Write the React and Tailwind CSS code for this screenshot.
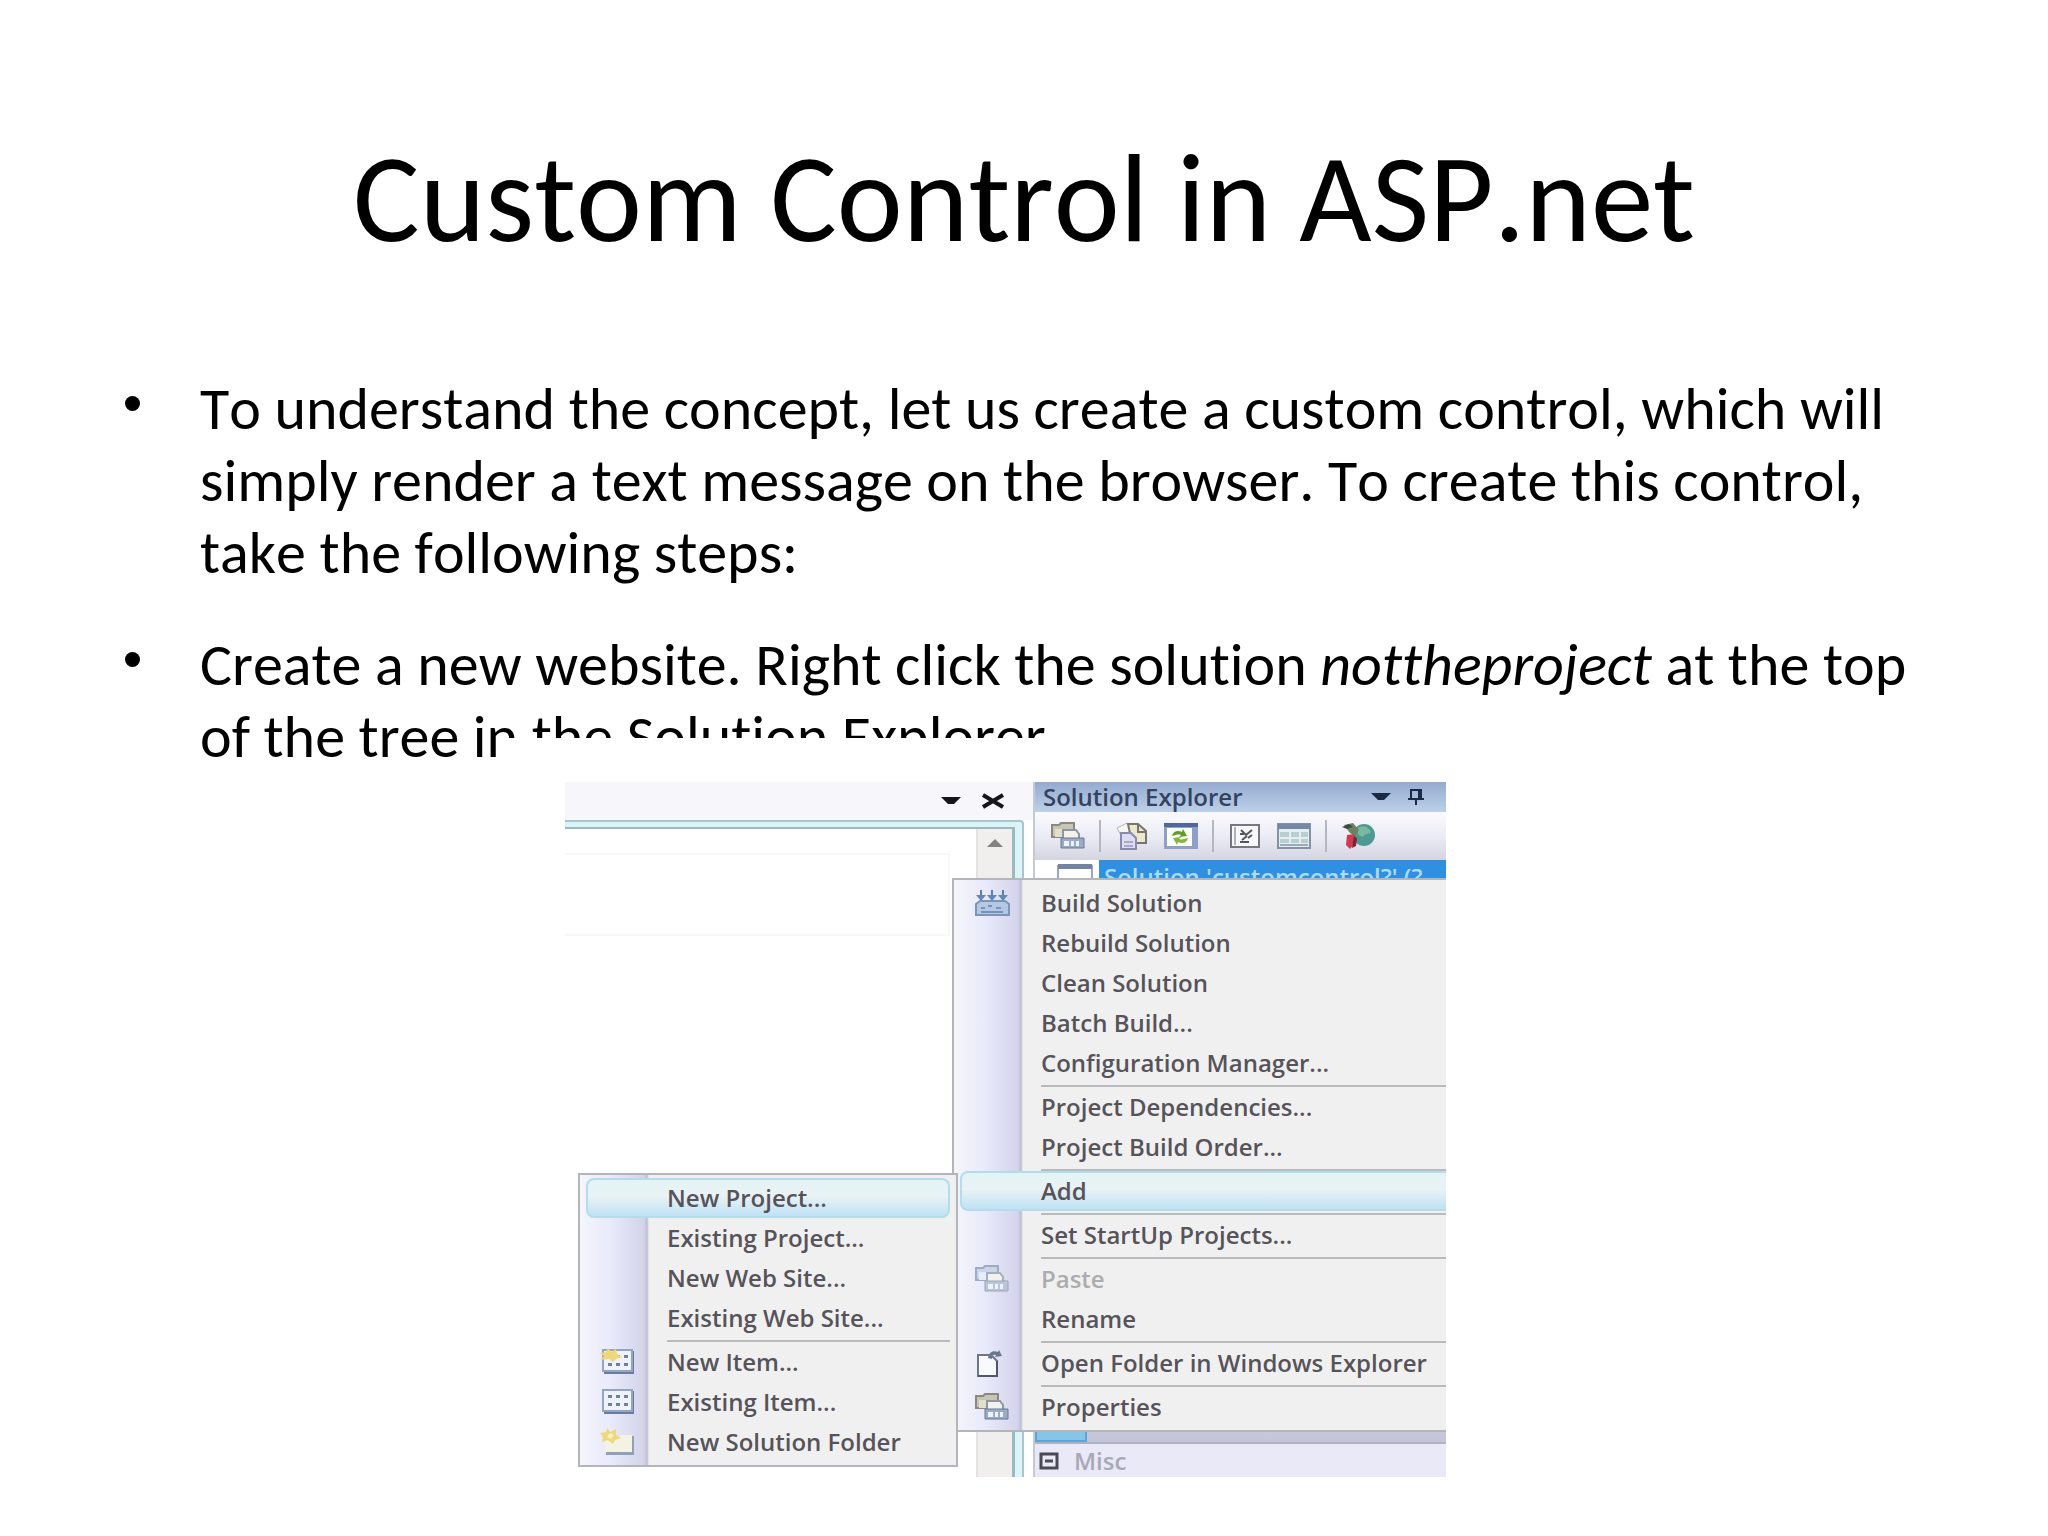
import React from "react";

const FolderWindowIcon = ({ muted }) => (
  <svg viewBox="0 0 36 28" className="w-9 h-7 shrink-0">
    <path d="M2 3h7l2-2h13v14H2z" fill={muted ? "#ccd5e6" : "#c9c5b4"} stroke={muted ? "#9eabc2" : "#8b897f"} strokeWidth="2" />
    <path d="M5 7h12v8H5z" fill={muted ? "#e6edf8" : "#e2dfcb"} />
    <path d="M13 8h13l3 4v8H13z" fill="#f2f1ec" stroke={muted ? "#a3aec2" : "#8e96a4"} strokeWidth="2" />
    <path d="M11 16h23v10H11z" fill={muted ? "#b9c5d8" : "#9aabc6"} stroke={muted ? "#98a6bd" : "#667896"} strokeWidth="1" />
    <path d="M14 19h5v5h-5zM21 19h3v5h-3zM26 19h3v5h-3z" fill="#eef2fa" />
  </svg>
);

const ShowFilesIcon = () => (
  <svg viewBox="0 0 36 28" className="w-9 h-7 shrink-0">
    <path d="M3 6l10-5 4 6-7 12z" fill="#f7f6f4" stroke="#b5b1b7" strokeWidth="1" />
    <path d="M14 2h10l8 7v12H18z" fill="#ece7ce" stroke="#77766d" strokeWidth="2" />
    <path d="M24 3v7h8" fill="none" stroke="#77766d" strokeWidth="2" />
    <path d="M7 11h10l5 5v11H7z" fill="#dcdcf2" stroke="#8a8aac" strokeWidth="2" />
    <path d="M10 20h9M10 24h9" stroke="#a9a9ca" strokeWidth="2" />
  </svg>
);

const RefreshIcon = () => (
  <svg viewBox="0 0 36 28" className="w-9 h-7 shrink-0">
    <path d="M1 1h34v26H1z" fill="#8fa0c6" />
    <path d="M1 1h34v4H1z" fill="#4f679c" />
    <path d="M4 6h25v18H4z" fill="#fbfdf8" />
    <path d="M9 14c1-5 6-6 10-4l1-3 4 7-8 1 2-2c-3-1-5 0-9 1z" fill="#5f9f25" />
    <path d="M25 16c-1 5-6 6-10 4l-1 3-4-7 8-1-2 2c3 1 5 0 9-1z" fill="#86b53c" />
  </svg>
);

const ViewCodeIcon = () => (
  <svg viewBox="0 0 36 28" className="w-9 h-7 shrink-0">
    <path d="M4 3h28v22H4z" fill="#f8f8fa" stroke="#777782" strokeWidth="2" />
    <path d="M8 5v18" stroke="#b0b0b8" strokeWidth="2" />
    <path d="M14 8l5 5 6-5M13 12h4M15 18l5-4M13 20h9M25 13l-4 3" fill="none" stroke="#55555f" strokeWidth="2" />
  </svg>
);

const DesignerIcon = () => (
  <svg viewBox="0 0 36 28" className="w-9 h-7 shrink-0">
    <path d="M2 2h32v24H2z" fill="#e5edef" stroke="#8492a3" strokeWidth="2" />
    <path d="M2 2h32v5H2z" fill="#7387a6" />
    <path d="M4 10h9v5H4zM15 10h8v5h-8zM25 10h7v5h-7zM4 17h9v4H4zM15 17h8v4h-8zM25 17h7v4h-7z" fill="#b8cfd2" />
    <path d="M4 23h28" stroke="#9baab8" strokeWidth="2" />
  </svg>
);

const GlobeIcon = () => (
  <svg viewBox="0 0 36 28" className="w-9 h-7 shrink-0">
    <ellipse cx="24" cy="13" rx="11" ry="11" fill="#4d9a92" />
    <path d="M18 6c5-3 11-1 13 4-3 3-6 1-8 5-3 0-7-4-5-9z" fill="#79b9a0" />
    <path d="M4 3l9-2 6 7-4 6-5-3z" fill="#6c8260" />
    <path d="M2 5l7-3 4 3-6 2z" fill="#3d4a3f" />
    <path d="M7 13l7-1 1 9-5 6-4-4z" fill="#cf3a50" />
    <path d="M14 14l3 2-1 8-4 2z" fill="#7c2433" />
  </svg>
);

const BuildIcon = () => (
  <svg viewBox="0 0 36 28" className="w-9 h-7 shrink-0">
    <path d="M7 1v9M18 1v9M29 1v9" stroke="#5b7db0" strokeWidth="2" />
    <path d="M2 6h10l-5 6zM13 6h10l-5 6zM24 6h10l-5 6z" fill="#6487b8" />
    <path d="M2 15l4-3h25l4 3v11H2z" fill="#b4c8e4" stroke="#7b94ba" strokeWidth="2" />
    <path d="M7 19h4M14 17h4M22 19h5M7 23h22" stroke="#7892bb" strokeWidth="2" />
  </svg>
);

const OpenFolderIcon = () => (
  <svg viewBox="0 0 36 28" className="w-9 h-7 shrink-0">
    <path d="M4 6h13l6 6v15H4z" fill="#f9fafc" stroke="#6d7788" strokeWidth="2" />
    <path d="M23 12v15H4" fill="none" stroke="#4f5969" strokeWidth="2" />
    <path d="M14 9c1-6 5-8 10-6l1-2 3 6-7 1 1-2c-3-1-4 0-4 4z" fill="#6a788c" />
  </svg>
);

const ItemIcon = ({ isNew }) => (
  <svg viewBox="0 0 36 28" className="w-9 h-7 shrink-0">
    <path d="M4 3h30v23H4z" fill="#6a7c9d" />
    <path d="M3 2h29v21H3z" fill="#eef2fa" stroke="#94a5c2" strokeWidth="2" />
    <path d="M8 7h4v3H8zM16 7h4v3h-4zM24 7h4v3h-4zM8 15h4v3H8zM16 15h4v3h-4zM24 15h4v3h-4z" fill="#71809a" />
    {isNew && <path d="M8 0l3 4 5-3 1 5 5 3-6 2-3 3-4-3-9 1 4-4-4-3 6-1z" fill="#eed87b" />}
  </svg>
);

const NewFolderIcon = () => (
  <svg viewBox="0 0 36 28" className="w-9 h-7 shrink-0">
    <path d="M6 11h12l3-3h13v19H6z" fill="#919fb8" />
    <path d="M5 10h13l3-3h11v17H5z" fill="#f4f2e3" />
    <path d="M7 0l3 4 6-3v6l5 3-6 2-2 4-5-4-6 2 1-5-3-4 6-1z" fill="#eed87b" />
    <path d="M10 5l4 2-3 4-4-2z" fill="#fbf3c2" />
  </svg>
);

const buildMenu = [
  { label: "Build Solution", icon: <BuildIcon /> },
  { label: "Rebuild Solution" },
  { label: "Clean Solution" },
  { label: "Batch Build..." },
  { label: "Configuration Manager..." },
  { separator: true },
  { label: "Project Dependencies..." },
  { label: "Project Build Order..." },
  { separator: true },
  { label: "Add", active: true },
  { separator: true },
  { label: "Set StartUp Projects..." },
  { separator: true },
  { label: "Paste", icon: <FolderWindowIcon muted />, disabled: true },
  { label: "Rename" },
  { separator: true },
  { label: "Open Folder in Windows Explorer", icon: <OpenFolderIcon /> },
  { separator: true },
  { label: "Properties", icon: <FolderWindowIcon /> },
];

const addMenu = [
  { label: "New Project...", active: true },
  { label: "Existing Project..." },
  { label: "New Web Site..." },
  { label: "Existing Web Site..." },
  { separator: true },
  { label: "New Item...", icon: <ItemIcon isNew /> },
  { label: "Existing Item...", icon: <ItemIcon /> },
  { label: "New Solution Folder", icon: <NewFolderIcon /> },
];

const Menu = ({ items, name }) => (
  <div
    role="menu"
    aria-label={name}
    className="py-[3px] px-[6px] bg-[linear-gradient(to_right,#f5f5fb_0px,#e9eafb_30px,#d3d4ea_64px,#bcbed0_67px,#f1f0f1_69px)]"
  >
    {items.map((item, i) =>
      item.separator ? (
        <div key={i} role="separator" className="h-1 pt-[2px] pl-[81px]">
          <div className="h-[2px] bg-[#b9babd]" />
        </div>
      ) : (
        <button
          key={i}
          role="menuitem"
          disabled={item.disabled}
          className={`flex w-full h-10 items-center pl-[12px] text-left text-[24px] leading-7 font-semibold whitespace-nowrap ${
            item.disabled ? "text-[#acacaf]" : "text-[#56545a]"
          } ${
            item.active
              ? "rounded-lg border-2 border-[#b5dcea] bg-[linear-gradient(#e3f4f5,#eaf2f4_45%,#bfe2f5)]"
              : "border-2 border-transparent"
          }`}
        >
          <span className="w-[67px] shrink-0 flex">{item.icon}</span>
          {item.label}
        </button>
      )
    )}
  </div>
);

const EditorPane = () => (
  <div className="flex-1 min-w-0 flex flex-col">
    <div className="h-[38px] bg-[#f6f6fb] flex items-center justify-end gap-[20px] pr-[28px]">
      <button aria-label="Window list">
        <svg viewBox="0 0 20 8" className="w-5 h-2">
          <path d="M0 0h20l-7 7H7z" fill="#15151b" />
        </svg>
      </button>
      <button aria-label="Close">
        <svg viewBox="0 0 24 16" className="w-6 h-4">
          <path d="M2 2l20 12M22 2L2 14" stroke="#15151b" strokeWidth="4" />
        </svg>
      </button>
    </div>
    <div className="flex-1 flex pr-[9px]">
      <div className="flex-1 flex border-t-2 border-r-2 border-[#a8c6cd] bg-[#dcf4f7] pt-[5px] pr-[7px] rounded-tr">
        <div className="flex-1 flex border-t-2 border-r-[3px] border-[#9abac2] bg-white">
          <div className="flex-1 pt-[24px]">
            <div className="h-[83px] mr-[26px] border-y-2 border-r-2 border-[#f8f8f5]" />
          </div>
          <div className="w-[36px] bg-[#f0efee] border-l-2 border-[#e3e1e2] flex justify-center pt-[10px]">
            <svg viewBox="0 0 16 8" className="w-4 h-2">
              <path d="M8 0l8 8H0z" fill="#838383" />
            </svg>
          </div>
        </div>
      </div>
    </div>
  </div>
);

const SolutionExplorer = () => (
  <div className="w-[413px] flex flex-col border-l-2 border-[#c3cad6]">
    <div className="h-[30px] bg-[linear-gradient(#93abcf,#bdd0ea)] flex items-center pl-[8px] pr-[21px] text-[#34435f]">
      <h2 className="flex-1 text-[24px] leading-7 font-semibold">Solution Explorer</h2>
      <button aria-label="Window position" className="mr-[16px]">
        <svg viewBox="0 0 20 8" className="w-5 h-2">
          <path d="M0 0h20l-7 7H7z" fill="#1c2b45" />
        </svg>
      </button>
      <button aria-label="Auto hide">
        <svg viewBox="0 0 18 18" className="w-[18px] h-[18px]">
          <path d="M4 2h10v9H4zM1 11h16M9 11v6M12 2v9" fill="none" stroke="#1c2b45" strokeWidth="2" />
        </svg>
      </button>
    </div>
    <div className="h-[48px] bg-[linear-gradient(#fafafd,#ececf6_50%,#d5d5e2)] flex items-center gap-[13px] pl-[15px]">
      <button aria-label="Properties"><FolderWindowIcon /></button>
      <div className="w-[2px] h-8 bg-[#b5b5c4]" />
      <button aria-label="Show all files"><ShowFilesIcon /></button>
      <button aria-label="Refresh"><RefreshIcon /></button>
      <div className="w-[2px] h-8 bg-[#b5b5c4]" />
      <button aria-label="View code"><ViewCodeIcon /></button>
      <button aria-label="View designer"><DesignerIcon /></button>
      <div className="w-[2px] h-8 bg-[#b5b5c4]" />
      <button aria-label="Configuration"><GlobeIcon /></button>
    </div>
    <div className="flex-1 bg-white">
      <div className="flex h-[34px]">
        <svg viewBox="0 0 64 34" className="w-16 h-[34px] shrink-0">
          <path d="M23 6h34v26H23z" fill="#fff" stroke="#9ea7bd" strokeWidth="2" />
          <path d="M23 4h34v5H23z" fill="#7482a3" />
        </svg>
        <div className="flex-1 px-[5px] pt-[3px] bg-[#2f8fe0] text-[#a9dcf8] text-[24px] leading-7 font-semibold whitespace-nowrap">
          Solution 'customcontrol?' (?
        </div>
      </div>
    </div>
    <div className="h-[16px] flex bg-[linear-gradient(#c9c9dc,#c3c4d8)] border-b-2 border-[#b1b3c5]">
      <div className="w-[52px] bg-[#86c4ea] border-2 border-[#5fa5d3]" />
    </div>
    <div className="h-[33px] bg-[#e9e9f8] flex items-center gap-[15px] pl-[4px]">
      <button aria-label="Collapse">
        <svg viewBox="0 0 20 18" className="w-5 h-[18px]">
          <path d="M2 2h16v14H2zM6 9h8" fill="none" stroke="#4a4a54" strokeWidth="3" />
        </svg>
      </button>
      <span className="text-[24px] leading-7 font-semibold text-[#a9a8b4]">Misc</span>
    </div>
  </div>
);

const Bullet = ({ children }) => (
  <li className="flex">
    <span className="w-[15px] h-[15px] mt-[23px] mr-[60px] shrink-0 rounded-full bg-black" />
    <p>{children}</p>
  </li>
);

export default function App() {
  return (
    <main className="bg-white text-black pt-[127px] pb-[59px] overflow-hidden [font-variant-ligatures:none]">
      <h1 className="text-center text-[125px] leading-[144px] [font-kerning:none] font-['Carlito','Lato',sans-serif]">
        Custom Control in ASP.net
      </h1>

      <ul className="mt-[102px] pl-[125px] flex flex-col gap-[40px] text-[60px] leading-[72px] [font-kerning:none] whitespace-nowrap font-['Carlito','Lato',sans-serif]">
        <Bullet>
          To understand the concept, let us create a custom control, which will
          <br />
          simply render a text message on the browser. To create this control,
          <br />
          take the following steps:
        </Bullet>
        <Bullet>
          Create a new website. Right click the solution <em>nottheproject</em> at the top
          <br />
          of the tree in the Solution Explorer.
        </Bullet>
      </ul>

      {/* The figure covers the lower part of the last line */}
      <figure className="relative -mt-[35px] mx-auto w-[1032px] bg-white pt-[44px] pl-[57px] font-['Open_Sans','Noto_Sans',sans-serif]">
        <div className="relative w-[881px] h-[695px] flex overflow-hidden">
          <EditorPane />
          <SolutionExplorer />
          {/* Runs past the right edge of the window */}
          <div className="absolute left-[387px] top-[96px] -right-[12px] border-y-2 border-l-2 border-[#b4b5ba]">
            <Menu items={buildMenu} name="Solution" />
          </div>
          <div className="absolute left-[13px] top-[391px] w-[380px] border-2 border-[#b4b5ba]">
            <Menu items={addMenu} name="Add" />
          </div>
        </div>
      </figure>
    </main>
  );
}
